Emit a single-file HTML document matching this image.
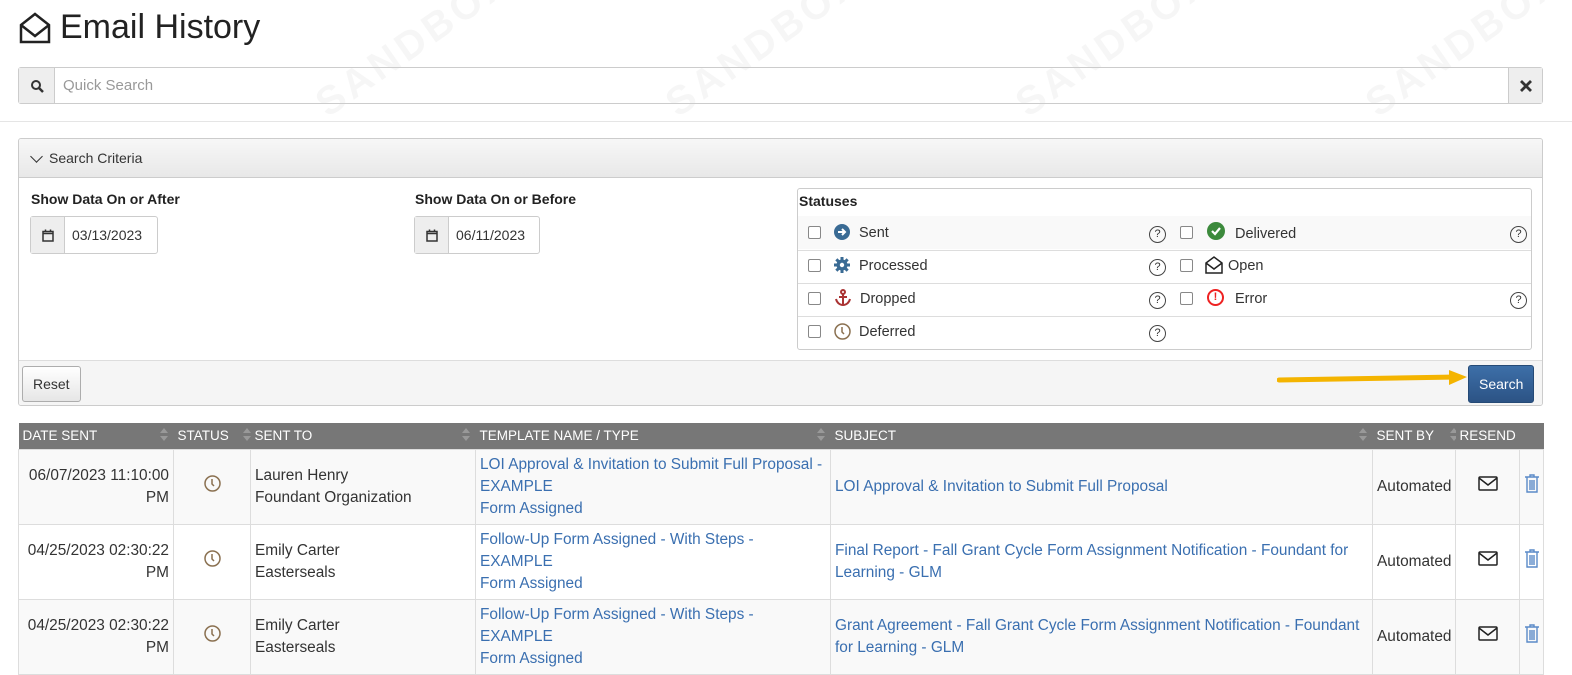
<!DOCTYPE html>
<html><head><meta charset="utf-8"><style>
*{box-sizing:border-box}
body{margin:0;width:1572px;height:666px;overflow:hidden;background:#fff;font-family:"Liberation Sans",Arial,sans-serif;font-size:14px;color:#333;position:relative}
.abs{position:absolute}
.wm{position:absolute;color:rgba(0,0,0,0.035);font-size:40px;font-weight:bold;transform:rotate(-35deg);white-space:nowrap;letter-spacing:4px}
h1{position:absolute;left:18px;top:8px;margin:0;font-weight:normal;font-size:34px;color:#222;display:flex;align-items:center;gap:8px}
.search{left:18px;top:67px;width:1525px;height:37px;border:1px solid #ccc;border-radius:3px;display:flex}
.search .ic{width:36px;background:#eee;border-right:1px solid #ccc;display:flex;align-items:center;justify-content:center}
.search .tx{flex:1;color:#999;padding:9px 8px;font-size:15px}
.search .x{width:34px;background:#eee;border-left:1px solid #ccc;display:flex;align-items:center;justify-content:center}
.hr{left:0;top:121px;width:1572px;height:1px;background:#e5e5e5}
.panel{left:18px;top:138px;width:1525px;height:268px;border:1px solid #ccc;border-radius:3px;overflow:hidden}
.ph{height:39px;background:linear-gradient(#f7f7f7,#e8e8e8);border-bottom:1px solid #ccc;padding:11px 10px;font-size:14px;color:#333}
.pf{position:absolute;left:0;top:221px;width:100%;height:46px;background:#f5f5f5;border-top:1px solid #ddd}
.lbl{font-weight:bold;font-size:14px;color:#222}
.date{height:38px;border:1px solid #ccc;border-radius:3px;display:flex;font-size:14px}
.date .c{width:34px;background:#eee;border-right:1px solid #ccc;display:flex;align-items:center;justify-content:center}
.date .v{padding:10px 7px}
.st{left:797px;top:188px;width:735px;height:162px;border:1px solid #ccc;border-radius:3px;overflow:hidden}
.st .r{position:absolute;left:0;width:100%;height:33px;border-top:1px solid #ddd}
.cb{position:absolute;width:13px;height:13px;border:1px solid #888;border-radius:2px;background:#fff}
.q{position:absolute;width:17px;height:17px;border:1px solid #444;border-radius:50%;font-size:11px;text-align:center;line-height:15px;color:#333}
.t{position:absolute;font-size:14.5px;color:#333}
.btn{position:absolute;border:1px solid #adadad;border-radius:3px;background:linear-gradient(#fff,#e6e6e6);font-size:14px;padding:0 10px}
table{position:absolute;left:18px;top:423px;width:1525px;border-collapse:collapse;font-size:15.4px;table-layout:fixed}
th{background:#777;color:#fff;font-weight:normal;text-align:left;height:26px;padding:0 4px;font-size:13.5px;text-transform:uppercase;position:relative}
th .s{position:absolute;right:10px;top:5px;width:0;height:0}
th .s:before{content:"";position:absolute;left:-4px;top:0;border:4px solid transparent;border-bottom:5px solid #999;border-top:none}
th .s:after{content:"";position:absolute;left:-4px;top:8px;border:4px solid transparent;border-top:5px solid #999;border-bottom:none}
td{border:1px solid #ddd;padding:4px;line-height:22px;vertical-align:middle}
tr.o td{background:#f9f9f9}
a{color:#3a6fb0;text-decoration:none}
</style></head><body>
<div class="wm" style="left:300px;top:20px">SANDBOX</div>
<div class="wm" style="left:650px;top:20px">SANDBOX</div>
<div class="wm" style="left:1000px;top:20px">SANDBOX</div>
<div class="wm" style="left:1350px;top:20px">SANDBOX</div>
<h1><svg width="34" height="34" viewBox="0 0 34 34" fill="none" stroke="#222" stroke-width="2.5"><path d="M3 14 L17 3 L31 14 V31 H3 Z"/><path d="M3 14 L17 25 L31 14"/></svg>Email History</h1>
<div class="abs search"><div class="ic"><svg width="14" height="14" viewBox="0 0 14 14"><circle cx="6" cy="6" r="4" fill="none" stroke="#333" stroke-width="2"/><path d="M9 9l4 4" stroke="#333" stroke-width="2.5"/></svg></div><div class="tx">Quick Search</div><div class="x"><svg width="12" height="12"><path d="M1 1L11 11M11 1L1 11" stroke="#333" stroke-width="2.8"/></svg></div></div>
<div class="abs hr"></div>
<div class="abs panel">
<div class="ph"><span style="display:inline-block;width:9px;height:9px;border-left:1px solid #333;border-bottom:1px solid #333;transform:rotate(-45deg);margin:0 8px -1px 3px;position:relative;top:-3px"></span>Search Criteria</div>
<div class="pf"><div class="btn" style="left:3px;top:5px;height:36px;line-height:34px">Reset</div>
<div class="btn" style="left:1449px;top:4px;height:38px;line-height:36px;background:linear-gradient(#3d6fa8,#2c5385);color:#fff;border-color:#254a76">Search</div>
<svg class="abs" style="left:1258px;top:6px" width="195" height="24"><path d="M2 13 L180 10" stroke="#f4b400" stroke-width="5" stroke-linecap="round"/><path d="M172 3 L190 10 L172 18 Z" fill="#f4b400"/></svg></div>
</div>
<div class="abs lbl" style="left:31px;top:191px">Show Data On or After</div>
<div class="abs date" style="left:30px;top:216px;width:128px"><div class="c"><svg width="12" height="13"><rect x="1" y="2.5" width="10" height="9.5" fill="none" stroke="#333" stroke-width="1.5"/><path d="M1 4.5H11M3.5 0.5V3M8.5 0.5V3" stroke="#333" stroke-width="1.5"/></svg></div><div class="v">03/13/2023</div></div>
<div class="abs lbl" style="left:415px;top:191px">Show Data On or Before</div>
<div class="abs date" style="left:414px;top:216px;width:126px"><div class="c"><svg width="12" height="13"><rect x="1" y="2.5" width="10" height="9.5" fill="none" stroke="#333" stroke-width="1.5"/><path d="M1 4.5H11M3.5 0.5V3M8.5 0.5V3" stroke="#333" stroke-width="1.5"/></svg></div><div class="v">06/11/2023</div></div>
<div class="abs st">
<div class="t" style="left:1px;top:4px;font-weight:bold;color:#222;font-size:14px">Statuses</div>
<div class="r" style="top:27px;background:#f9f9f9;border-top:none"></div>
<div class="r" style="top:61px"></div><div class="r" style="top:94px"></div><div class="r" style="top:127px"></div>
<div class="cb" style="left:10px;top:37px"></div>
<svg class="abs" style="left:36px;top:35px" width="16" height="16"><circle cx="8" cy="8" r="8" fill="#3a6b94"/><path d="M4 8H11M8 5L11 8L8 11" stroke="#fff" stroke-width="2" fill="none"/></svg><div class="t" style="left:61px;top:36px">Sent</div>
<div class="q" style="left:351px;top:37px">?</div><div class="cb" style="left:382px;top:37px"></div>
<svg class="abs" style="left:409px;top:33px" width="18" height="18"><circle cx="9" cy="9" r="9" fill="#3c8a3c"/><path d="M5 9L8 12L13 6" stroke="#fff" stroke-width="2.2" fill="none"/></svg><div class="t" style="left:437px;top:37px">Delivered</div><div class="q" style="left:712px;top:37px">?</div>
<div class="cb" style="left:10px;top:70px"></div>
<svg class="abs" style="left:36px;top:68px" width="16" height="16" viewBox="0 0 16 16"><g fill="#3a6b94"><circle cx="8" cy="8" r="5.5"/><rect x="6.5" y="0" width="3" height="16"/><rect x="0" y="6.5" width="16" height="3"/><rect x="6.5" y="0" width="3" height="16" transform="rotate(45 8 8)"/><rect x="6.5" y="0" width="3" height="16" transform="rotate(-45 8 8)"/></g><circle cx="8" cy="8" r="2.2" fill="#fff"/></svg><div class="t" style="left:61px;top:69px">Processed</div>
<div class="q" style="left:351px;top:70px">?</div><div class="cb" style="left:382px;top:70px"></div>
<svg class="abs" style="left:406px;top:66px" width="20" height="20" fill="none" stroke="#222" stroke-width="1.5"><path d="M2 8 L10 2 L18 8 V18 H2 Z M2 8 L10 14 L18 8"/></svg><div class="t" style="left:430px;top:69px">Open</div>
<div class="cb" style="left:10px;top:103px"></div>
<svg class="abs" style="left:36px;top:100px" width="18" height="18" fill="none" stroke="#a33" stroke-width="2"><circle cx="9" cy="3" r="2"/><path d="M9 5V16M5 8H13M2 10C3 14 6 16 9 16C12 16 15 14 16 10"/></svg><div class="t" style="left:62px;top:102px">Dropped</div>
<div class="q" style="left:351px;top:103px">?</div><div class="cb" style="left:382px;top:103px"></div>
<div class="abs" style="left:409px;top:100px;width:17px;height:17px;border:2px solid #e22;border-radius:50%;color:#e22;font-size:11px;font-weight:bold;text-align:center;line-height:13px">!</div><div class="t" style="left:437px;top:102px">Error</div><div class="q" style="left:712px;top:103px">?</div>
<div class="cb" style="left:10px;top:136px"></div>
<svg class="abs" style="left:36px;top:134px" width="17" height="17" fill="none" stroke="#8a7050" stroke-width="1.5"><circle cx="8.5" cy="8.5" r="7.5"/><path d="M8 4V9L10 11"/></svg><div class="t" style="left:61px;top:135px">Deferred</div>
<div class="q" style="left:351px;top:136px">?</div>
</div>
<table>
<colgroup><col style="width:155px"><col style="width:77px"><col style="width:225px"><col style="width:355px"><col style="width:542px"><col style="width:83px"><col style="width:64px"><col style="width:24px"></colgroup>
<tr><th>Date Sent<span class="s"></span></th><th>Status<span class="s" style="right:4px"></span></th><th>Sent To<span class="s"></span></th><th>Template Name / Type<span class="s"></span></th><th>Subject<span class="s"></span></th><th>Sent By<span class="s" style="right:2px"></span></th><th>Resend</th><th></th></tr>
<tr class="o" style="height:74px"><td style="text-align:right">06/07/2023 11:10:00 PM</td><td style="text-align:center"><svg width="17" height="17" fill="none" stroke="#8a7050" stroke-width="1.5"><circle cx="8.5" cy="8.5" r="7.5"/><path d="M8 4V9L10 11"/></svg></td><td>Lauren Henry<br>Foundant Organization</td><td><a>LOI Approval &amp; Invitation to Submit Full Proposal - EXAMPLE<br>Form Assigned</a></td><td><a>LOI Approval &amp; Invitation to Submit Full Proposal</a></td><td>Automated</td><td style="text-align:center"><svg width="20" height="15" fill="none" stroke="#222" stroke-width="1.5"><rect x="1" y="1" width="18" height="13" rx="1"/><path d="M1 2L10 9L19 2"/></svg></td><td style="text-align:center;padding:0"><svg width="16" height="20" fill="none" stroke="#5a8ac8" stroke-width="1.4"><path d="M1 4H15M6 4V2H10V4M3 4V19H13V4M6 7V17M8 7V17M10 7V17"/></svg></td></tr>
<tr style="height:73px"><td style="text-align:right">04/25/2023 02:30:22 PM</td><td style="text-align:center"><svg width="17" height="17" fill="none" stroke="#8a7050" stroke-width="1.5"><circle cx="8.5" cy="8.5" r="7.5"/><path d="M8 4V9L10 11"/></svg></td><td>Emily Carter<br>Easterseals</td><td><a>Follow-Up Form Assigned - With Steps -<br>EXAMPLE<br>Form Assigned</a></td><td><a>Final Report - Fall Grant Cycle Form Assignment Notification - Foundant for Learning - GLM</a></td><td>Automated</td><td style="text-align:center"><svg width="20" height="15" fill="none" stroke="#222" stroke-width="1.5"><rect x="1" y="1" width="18" height="13" rx="1"/><path d="M1 2L10 9L19 2"/></svg></td><td style="text-align:center;padding:0"><svg width="16" height="20" fill="none" stroke="#5a8ac8" stroke-width="1.4"><path d="M1 4H15M6 4V2H10V4M3 4V19H13V4M6 7V17M8 7V17M10 7V17"/></svg></td></tr>
<tr class="o" style="height:73px"><td style="text-align:right">04/25/2023 02:30:22 PM</td><td style="text-align:center"><svg width="17" height="17" fill="none" stroke="#8a7050" stroke-width="1.5"><circle cx="8.5" cy="8.5" r="7.5"/><path d="M8 4V9L10 11"/></svg></td><td>Emily Carter<br>Easterseals</td><td><a>Follow-Up Form Assigned - With Steps -<br>EXAMPLE<br>Form Assigned</a></td><td><a>Grant Agreement - Fall Grant Cycle Form Assignment Notification - Foundant<br>for Learning - GLM</a></td><td>Automated</td><td style="text-align:center"><svg width="20" height="15" fill="none" stroke="#222" stroke-width="1.5"><rect x="1" y="1" width="18" height="13" rx="1"/><path d="M1 2L10 9L19 2"/></svg></td><td style="text-align:center;padding:0"><svg width="16" height="20" fill="none" stroke="#5a8ac8" stroke-width="1.4"><path d="M1 4H15M6 4V2H10V4M3 4V19H13V4M6 7V17M8 7V17M10 7V17"/></svg></td></tr>
</table>
</body></html>
